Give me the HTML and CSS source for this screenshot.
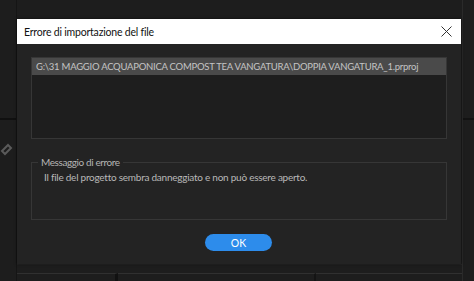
FILE: index.html
```html
<!DOCTYPE html>
<html>
  <head>
    <title>Errore di importazione del file</title>
    <link rel="stylesheet" href="styles.css">
  </head>
  <body>
    <div class="app">
      <div class="side">
        <div class="side-top"></div>
        <div class="side-tool">
          <svg width="14" height="14" viewBox="0 0 14 14">
            <path d="M2 9 L8 3 L11 6 L5 12 Z" fill="none" stroke="#5a5a5a" stroke-width="2"/>
          </svg>
        </div>
      </div>
      <div class="main">
        <div class="main-top"></div>
        <div class="main-bottom">
          <div class="pane pane-a"></div>
          <div class="pane pane-b"></div>
          <div class="pane pane-c"></div>
        </div>
      </div>
      <div class="right">
        <div class="right-top"></div>
      </div>
    </div>

    <div class="dialog">
      <div class="titlebar">
        <span class="title">Errore di importazione del file</span>
        <svg class="close" width="11" height="11" viewBox="0 0 11 11">
          <path d="M0.5 0.5 L10.5 10.5 M10.5 0.5 L0.5 10.5" stroke="#333" stroke-width="1"/>
        </svg>
      </div>
      <div class="content">
        <div class="filelist">
          <div class="file-row selected">G:\31 MAGGIO ACQUAPONICA COMPOST TEA VANGATURA\DOPPIA VANGATURA_1.prproj</div>
        </div>
        <fieldset class="errbox">
          <legend>Messaggio di errore</legend>
          <p class="errtext">Il file del progetto sembra danneggiato e non può essere aperto.</p>
        </fieldset>
        <div class="actions">
          <button type="button" class="ok">OK</button>
        </div>
      </div>
    </div>
  </body>
</html>
```

FILE: styles.css
```css
body {
  margin: 0;
  padding: 0;
  width: 474px;
  height: 281px;
  overflow: hidden;
  background-color: #1d1d1d;
  font-family: Lato, "Open Sans", Arial, sans-serif;
  position: relative;
}

/* app behind the dialog */
.app {
  display: flex;
  height: 281px;
}

.side {
  width: 16px;
  border-right: 1px solid #151515;
}

.side-top {
  height: 118px;
  border-bottom: 2px solid #101010;
}

.side-tool {
  padding: 20px 0 0 0;
}

.main {
  flex: 1;
  display: flex;
  flex-direction: column;
}

.main-top {
  flex: 1;
}

.main-bottom {
  height: 16px;
  display: flex;
  border-top: 1px solid #262626;
}

.pane {
  border-top: 1px solid #303030;
  margin-top: 8px;
}

.pane-a {
  width: 98px;
  border-right: 3px solid #111111;
}

.pane-b {
  width: 196px;
  border-right: 2px solid #141414;
}

.pane-c {
  flex: 1;
}

.right {
  width: 11px;
  border-left: 1px solid #2a2a2a;
}

.right-top {
  height: 118px;
  border-bottom: 2px solid #121212;
}

/* dialog */
.dialog {
  position: absolute;
  left: 17px;
  top: 19px;
  width: 444px;
  height: 245px;
  background-color: #232323;
  box-shadow: 0 0 3px rgba(0, 0, 0, 0.6);
  display: flex;
  flex-direction: column;
}

.titlebar {
  height: 25px;
  background-color: #ffffff;
  display: flex;
  align-items: center;
  justify-content: space-between;
  padding: 0 9px 0 7px;
}

.title {
  font-family: Lato, "Open Sans", Arial, sans-serif;
  font-size: 10.5px;
  letter-spacing: -0.2px;
  color: #111111;
}

.content {
  padding: 13px 14px 0 14px;
  display: flex;
  flex-direction: column;
}

.filelist {
  height: 80px;
  border: 1px solid #363636;
  background-color: #1e1e1e;
}

.file-row {
  height: 17px;
  line-height: 17px;
  padding-left: 4px;
  font-size: 9.5px;
  letter-spacing: -0.25px;
  color: #c4c4c4;
  white-space: nowrap;
}

.file-row.selected {
  background-color: #4a4a4a;
}

.errbox {
  margin: 17px 0 0 0;
  padding: 3px 12px 0 12px;
  height: 59px;
  border: 1px solid #363636;
}

.errbox legend {
  padding: 0 3px;
  margin-left: -6px;
  font-size: 10px;
  letter-spacing: -0.4px;
  color: #b4b4b4;
}

.errtext {
  margin: 0;
  font-size: 10px;
  letter-spacing: -0.25px;
  color: #b8b8b8;
}

.actions {
  display: flex;
  justify-content: center;
  padding-top: 14px;
}

.ok {
  width: 67px;
  height: 17px;
  border: none;
  border-radius: 9px;
  background-color: #2d8ceb;
  color: #ffffff;
  font-family: Lato, "Open Sans", Arial, sans-serif;
  font-size: 10.5px;
  padding: 0;
  margin-left: -1px;
  cursor: pointer;
}
```
